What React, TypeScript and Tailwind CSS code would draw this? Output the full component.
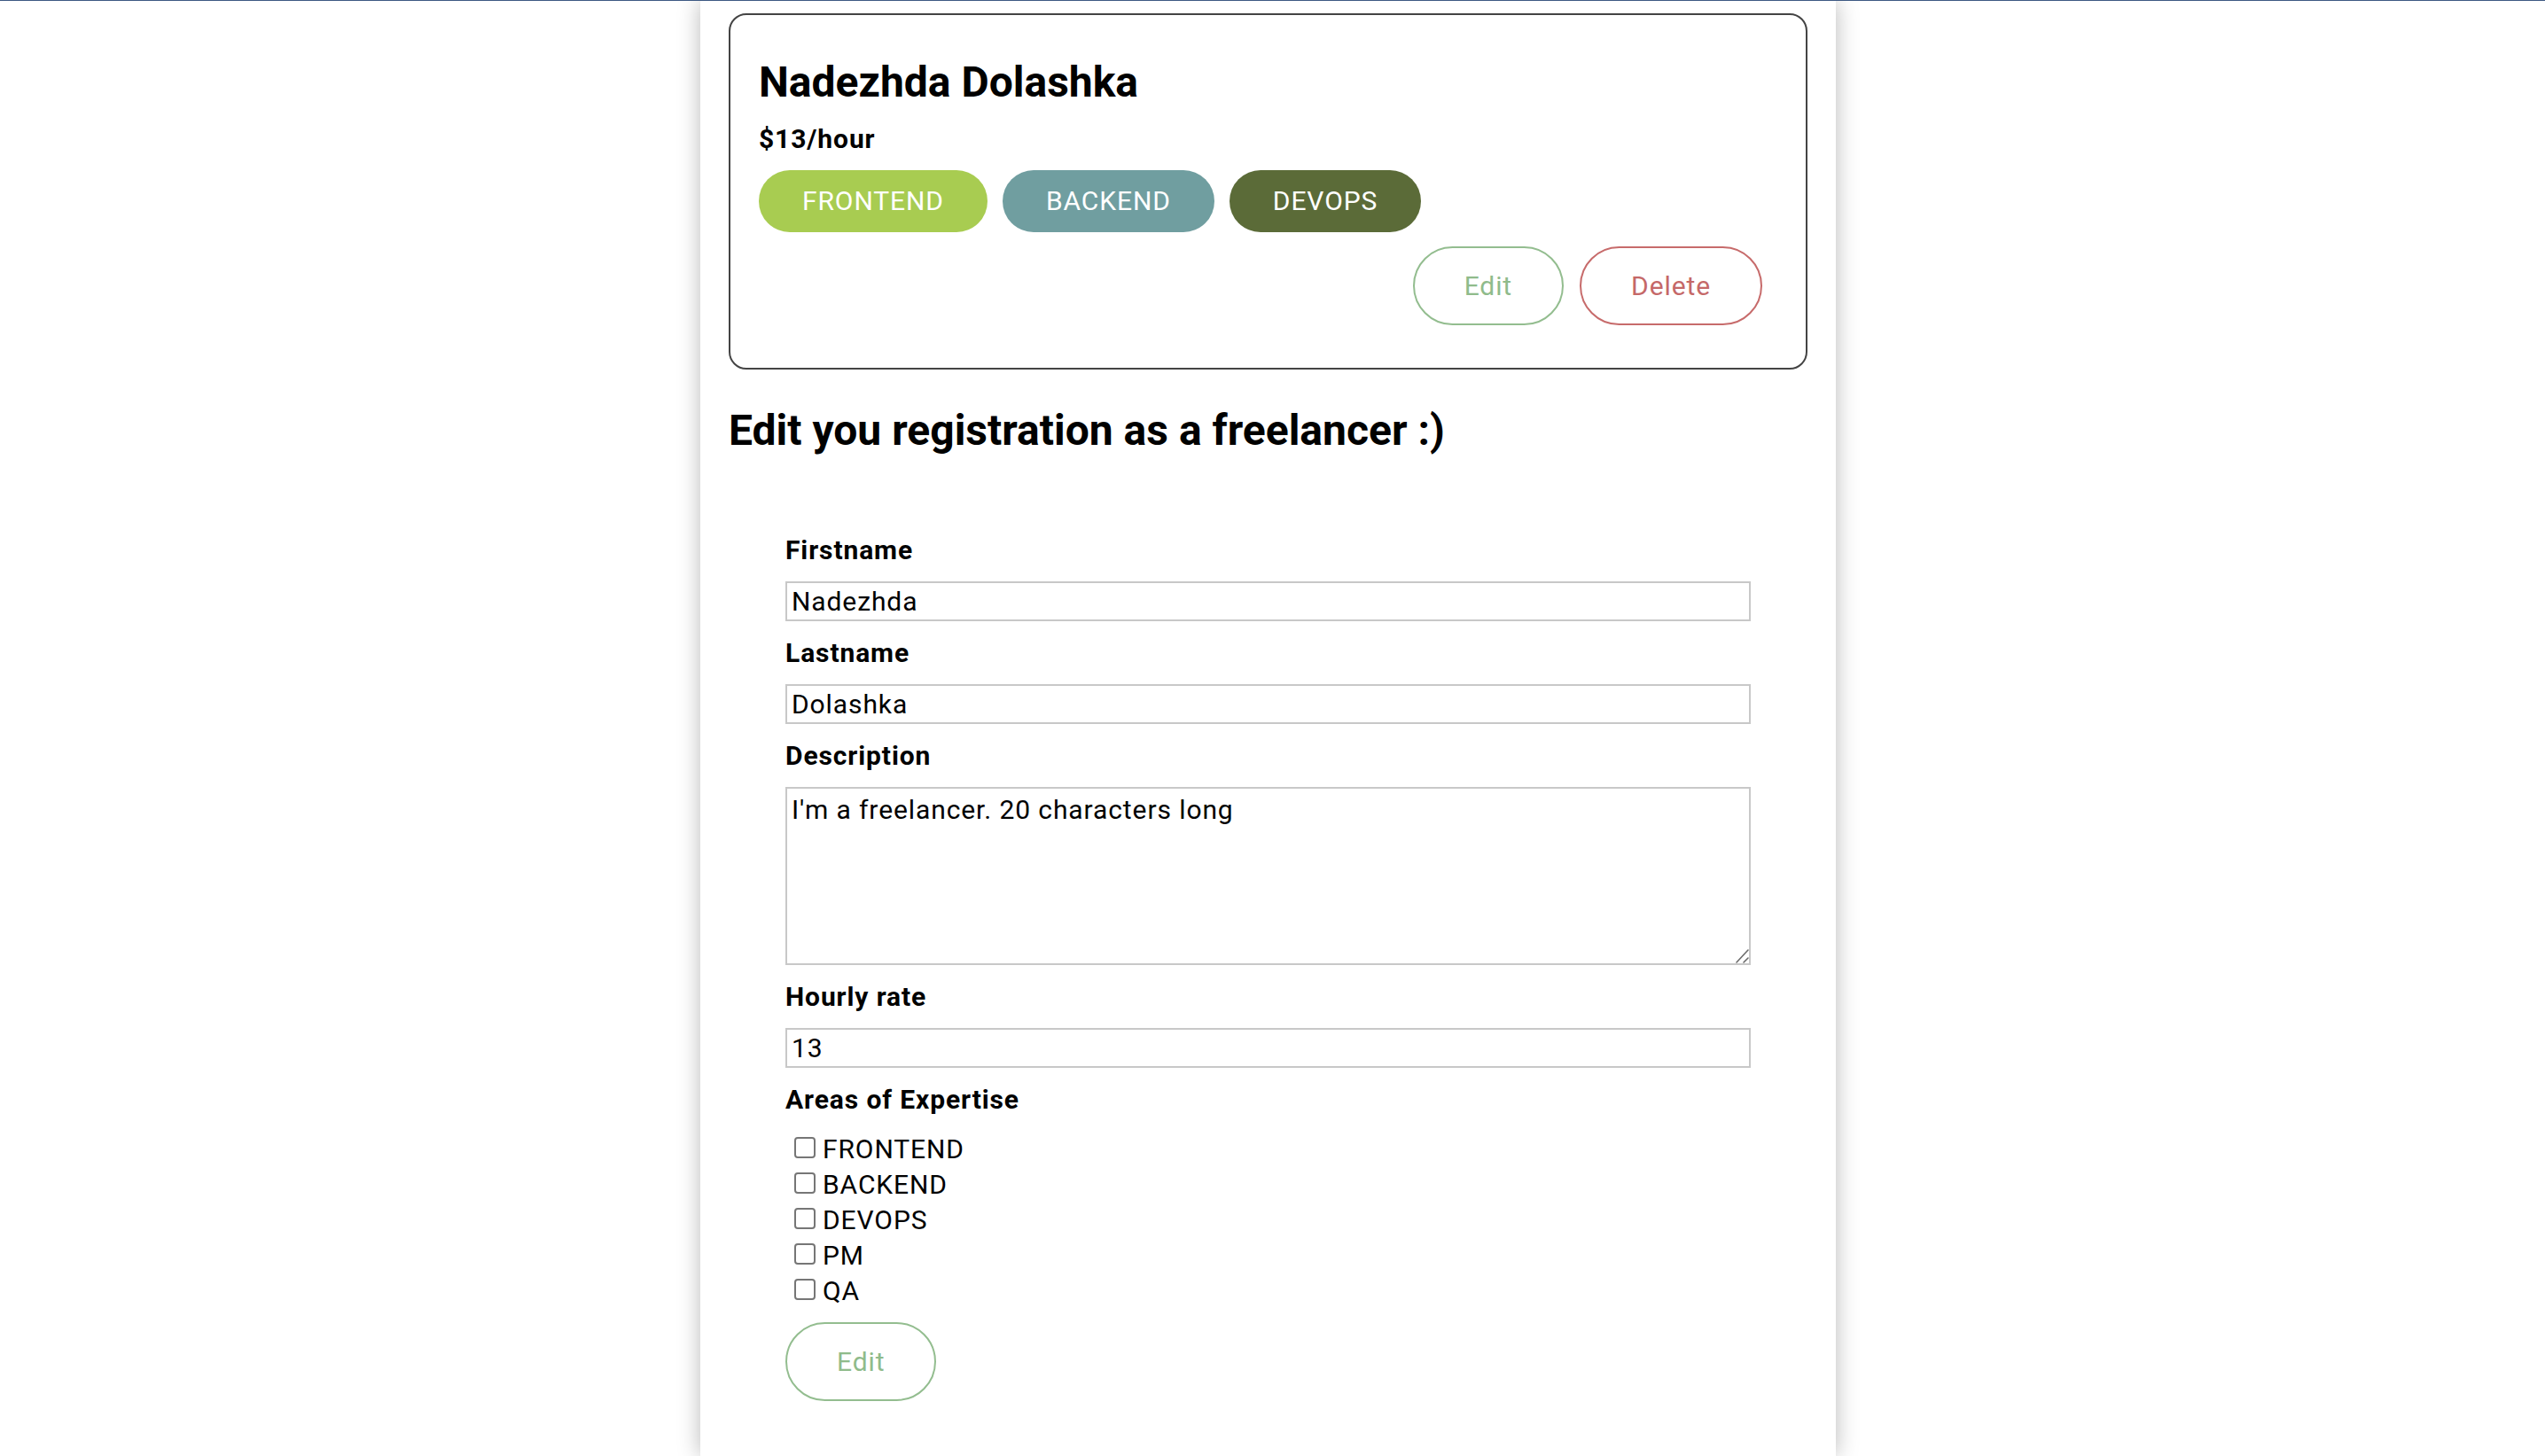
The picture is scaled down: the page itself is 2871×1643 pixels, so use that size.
import { useState } from 'react';

const areas = ['FRONTEND', 'BACKEND', 'DEVOPS', 'PM', 'QA'];

const pills = [
  { label: 'FRONTEND', color: 'bg-[#a8cc51]' },
  { label: 'BACKEND', color: 'bg-[#709ea0]' },
  { label: 'DEVOPS', color: 'bg-[#5b6b38]' },
];

function Field({ label, children }: { label: string; children: React.ReactNode }) {
  return (
    <div className="mb-[19px]">
      <label className="block text-[30px] font-bold leading-[34px] tracking-[0.03em]">{label}</label>
      <div className="mt-[18px]">{children}</div>
    </div>
  );
}

export default function App() {
  const [firstname, setFirstname] = useState('Nadezhda');
  const [lastname, setLastname] = useState('Dolashka');
  const [description, setDescription] = useState("I'm a freelancer. 20 characters long");
  const [rate, setRate] = useState('13');
  const [checked, setChecked] = useState<string[]>([]);

  const toggle = (a: string) =>
    setChecked((prev) => (prev.includes(a) ? prev.filter((x) => x !== a) : [...prev, a]));

  return (
    <div className="min-h-screen bg-white font-['Roboto',sans-serif] text-black">
      <div className="relative z-10 h-px bg-[#3d5983]" />

      {/* ── Page column ─────────────────────────────── */}
      <div className="ml-[790px] min-h-[1642px] w-[1281px] bg-white px-[32px] pt-[14px] shadow-[0_0_24px_rgba(0,0,0,0.28)]">
        {/* Freelancer card */}
        <div className="rounded-[20px] border-2 border-[#444444] pb-[48px] pl-[32px] pr-[49px] pt-[48px]">
          <h2 className="text-[48px] font-bold leading-[56px]">Nadezhda Dolashka</h2>
          <p className="mt-[19px] text-[30px] font-bold leading-[34px] tracking-[0.03em]">$13/hour</p>
          <div className="mt-[18px] flex gap-[17px]">
            {pills.map((p) => (
              <span
                key={p.label}
                className={`flex h-[70px] items-center rounded-full px-[49px] text-[30px] leading-[34px] tracking-[0.03em] text-white ${p.color}`}
              >
                {p.label}
              </span>
            ))}
          </div>
          <div className="mt-[16px] flex justify-end gap-[18px]">
            <button className="h-[89px] rounded-full border-2 border-[#93bd8f] px-[56px] text-[30px] leading-[34px] tracking-[0.03em] text-[#8fbb8b]">
              Edit
            </button>
            <button className="h-[89px] rounded-full border-2 border-[#c76b6b] px-[56px] text-[30px] leading-[34px] tracking-[0.03em] text-[#c56868]">
              Delete
            </button>
          </div>
        </div>

        <h2 className="mt-[41px] text-[48px] font-bold leading-[56px]">
          Edit you registration as a freelancer :)
        </h2>

        {/* Edit form */}
        <form className="mt-[90px] px-[64px]" onSubmit={(e) => e.preventDefault()}>
          <Field label="Firstname">
            <input
              value={firstname}
              onChange={(e) => setFirstname(e.target.value)}
              className="h-[45px] w-full border-2 border-[#c8c8c8] px-[5px] text-[30px] leading-[34px] tracking-[0.03em] outline-none"
            />
          </Field>
          <Field label="Lastname">
            <input
              value={lastname}
              onChange={(e) => setLastname(e.target.value)}
              className="h-[45px] w-full border-2 border-[#c8c8c8] px-[5px] text-[30px] leading-[34px] tracking-[0.03em] outline-none"
            />
          </Field>
          <Field label="Description">
            <div className="relative">
              <textarea
                value={description}
                onChange={(e) => setDescription(e.target.value)}
                className="block h-[201px] w-full resize-none border-2 border-[#c8c8c8] px-[5px] pt-[7px] text-[30px] leading-[34px] tracking-[0.03em] outline-none"
              />
              <svg className="pointer-events-none absolute bottom-0 right-0 h-[20px] w-[20px]" viewBox="0 0 20 20">
                <path d="M4 17 L17 3 M12 17 L17 12" stroke="#6b6b6b" strokeWidth="1.6" strokeLinecap="round" />
              </svg>
            </div>
          </Field>
          <Field label="Hourly rate">
            <input
              value={rate}
              onChange={(e) => setRate(e.target.value)}
              className="h-[45px] w-full border-2 border-[#c8c8c8] px-[5px] text-[30px] leading-[34px] tracking-[0.03em] outline-none"
            />
          </Field>

          <label className="block text-[30px] font-bold leading-[34px] tracking-[0.03em]">Areas of Expertise</label>
          <div className="mt-[19px]">
            {areas.map((a) => (
              <label key={a} className="flex h-[40px] items-start text-[30px] leading-[40px] tracking-[0.03em]">
                <input
                  type="checkbox"
                  checked={checked.includes(a)}
                  onChange={() => toggle(a)}
                  className="ml-[10px] mr-[8px] mt-[6px] h-[24px] w-[24px] shrink-0 appearance-none rounded-[4px] border-2 border-[#767676] bg-white checked:bg-[#1a73e8]"
                />
                {a}
              </label>
            ))}
          </div>

          <button
            type="submit"
            className="mt-[15px] h-[89px] rounded-full border-2 border-[#93bd8f] px-[56px] text-[30px] leading-[34px] tracking-[0.03em] text-[#8fbb8b]"
          >
            Edit
          </button>
        </form>
      </div>
    </div>
  );
}
